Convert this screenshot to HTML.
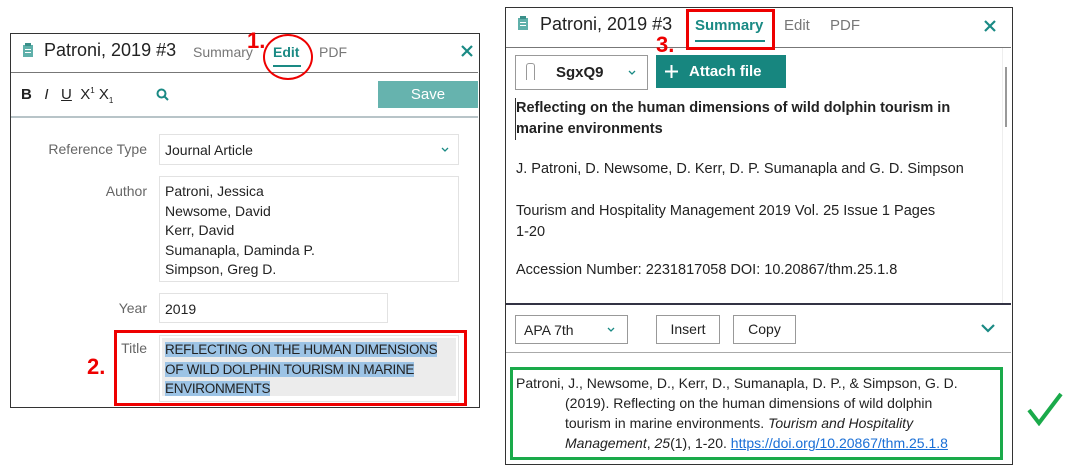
<!DOCTYPE html>
<html><head><style>
body{margin:0;width:1067px;height:469px;background:#fff;position:relative;overflow:hidden;font-family:"Liberation Sans",sans-serif;color:#222}
.a{position:absolute}
.box{position:absolute;border:1px solid #e2e2e2;background:#fff}
.lbl{position:absolute;color:#666;font-size:14px;text-align:right;width:137px;left:10px}
.red{color:#e00;font-weight:bold;font-size:22px;position:absolute}
.teal{color:#1a8a84}
</style></head><body>
<!-- LEFT PANEL -->
<div class="a" style="left:10px;top:33px;width:468px;height:373px;border:1px solid #333"></div>
<div class="a" style="left:11px;top:72px;width:467px;height:1px;background:#777"></div>
<div class="a" style="left:11px;top:116px;width:467px;height:2px;background:#b8c4c8"></div>
<svg class="a" style="left:22px;top:43px" width="12" height="15"><rect x="1" y="2" width="10" height="12" fill="#5fb0aa"/><rect x="3" y="0" width="6" height="3" fill="#3a8f89"/><rect x="3" y="6" width="6" height="1" fill="#fff"/><rect x="3" y="9" width="6" height="1" fill="#fff"/></svg>
<div class="a" style="left:44px;top:40px;font-size:18px">Patroni, 2019 #3</div>
<div class="a" style="left:193px;top:44px;font-size:14px;color:#777">Summary</div>
<div class="a" style="left:273px;top:44px;font-size:14px;font-weight:bold" ><span class="teal">Edit</span></div>
<div class="a" style="left:273px;top:65px;width:28px;height:2px;background:#1a8a84"></div>
<div class="a" style="left:319px;top:44px;font-size:14px;color:#777">PDF</div>
<svg class="a" style="left:461px;top:45px" width="12" height="12"><path d="M1 1L11 11M11 1L1 11" stroke="#1a8a84" stroke-width="2.2"/></svg>
<div class="red" style="left:247px;top:28px">1.</div>
<div class="a" style="left:263px;top:34px;width:46px;height:42px;border:2px solid #e00;border-radius:50%"></div>
<div class="a" style="left:21px;top:86px;font-size:15px"><b>B</b>&nbsp;&nbsp;&nbsp;<i>I</i>&nbsp;&nbsp;&nbsp;<u>U</u>&nbsp;&nbsp;X<sup style="font-size:8px">1</sup>&nbsp;X<sub style="font-size:8px">1</sub></div>
<svg class="a" style="left:156px;top:88px" width="14" height="14"><circle cx="5.5" cy="5.5" r="4" stroke="#1a8a84" stroke-width="2" fill="none"/><line x1="8.5" y1="8.5" x2="12" y2="12" stroke="#1a8a84" stroke-width="2"/></svg>
<div class="a" style="left:378px;top:81px;width:100px;height:27px;background:#66b3ae;color:#fff;font-size:15px;text-align:center;line-height:27px">Save</div>
<div class="lbl" style="top:141px">Reference Type</div>
<div class="box" style="left:159px;top:134px;width:298px;height:29px"><span class="a" style="left:5px;top:7px;font-size:14px">Journal Article</span><svg class="a" style="right:9px;top:12px" width="8" height="5"><path d="M1 1L4 4L7 1" stroke="#1a8a84" stroke-width="1.3" fill="none"/></svg></div>
<div class="lbl" style="top:183px">Author</div>
<div class="box" style="left:159px;top:176px;width:298px;height:104px;font-size:14px;line-height:19.5px"><div style="padding:5px 5px">Patroni, Jessica<br>Newsome, David<br>Kerr, David<br>Sumanapla, Daminda P.<br>Simpson, Greg D.</div></div>
<div class="lbl" style="top:300px">Year</div>
<div class="box" style="left:159px;top:293px;width:227px;height:28px"><span class="a" style="left:5px;top:7px;font-size:14px">2019</span></div>
<div class="lbl" style="top:340px">Title</div>
<div class="box" style="left:159px;top:335px;width:298px;height:65px"><div class="a" style="left:2px;top:2px;width:294px;height:58px;background:#ececec"></div>
<div class="a" style="left:5px;top:4px;font-size:13.5px;line-height:19.5px;width:295px;letter-spacing:-0.3px;white-space:nowrap"><span style="background:#9cc3e5">REFLECTING ON THE HUMAN DIMENSIONS</span><br><span style="background:#9cc3e5">OF WILD DOLPHIN TOURISM IN MARINE</span><br><span style="background:#9cc3e5">ENVIRONMENTS</span></div></div>
<div class="a" style="left:114px;top:330px;width:353px;height:76px;border:3px solid #e00;box-sizing:border-box"></div>
<div class="red" style="left:87px;top:354px">2.</div>

<!-- RIGHT PANEL -->
<div class="a" style="left:505px;top:7px;width:506px;height:456px;border:1px solid #333"></div>
<div class="a" style="left:506px;top:47px;width:505px;height:1px;background:#777"></div>
<svg class="a" style="left:517px;top:16px" width="12" height="15"><rect x="1" y="2" width="10" height="12" fill="#5fb0aa"/><rect x="3" y="0" width="6" height="3" fill="#3a8f89"/><rect x="3" y="6" width="6" height="1" fill="#fff"/><rect x="3" y="9" width="6" height="1" fill="#fff"/></svg>
<div class="a" style="left:540px;top:14px;font-size:18px">Patroni, 2019 #3</div>
<div class="a teal" style="left:695px;top:17px;font-size:15px;font-weight:bold">Summary</div>
<div class="a" style="left:695px;top:40px;width:70px;height:2px;background:#1a8a84"></div>
<div class="a" style="left:784px;top:17px;font-size:15px;color:#777">Edit</div>
<div class="a" style="left:830px;top:17px;font-size:15px;color:#777">PDF</div>
<svg class="a" style="left:984px;top:20px" width="12" height="12"><path d="M1 1L11 11M11 1L1 11" stroke="#1a8a84" stroke-width="2.2"/></svg>
<div class="a" style="left:686px;top:9px;width:89px;height:41px;border:3px solid #e00;box-sizing:border-box"></div>
<div class="red" style="left:656px;top:32px">3.</div>
<div class="a" style="left:1005px;top:67px;width:2px;height:60px;background:#999"></div>
<div class="a" style="left:1002px;top:48px;width:1px;height:256px;background:#eee"></div>
<div class="box" style="left:515px;top:55px;width:131px;height:33px;border-color:#999"><span class="a" style="left:10px;top:7px;width:7px;height:16px;border:1px solid #999;border-bottom:none;border-radius:3px 3px 0 0"></span><span class="a" style="left:40px;top:8px;font-size:15px;font-weight:bold">SgxQ9</span><svg class="a" style="right:11px;top:14px" width="8" height="5"><path d="M1 1L4 4L7 1" stroke="#1a8a84" stroke-width="1.3" fill="none"/></svg></div>
<div class="a" style="left:656px;top:55px;width:130px;height:33px;background:#17867f;color:#fff;font-size:15px;font-weight:bold;line-height:33px"><svg class="a" style="left:9px;top:10px" width="13" height="13"><path d="M6.5 0V13M0 6.5H13" stroke="#fff" stroke-width="2"/></svg><span style="position:absolute;left:33px">Attach file</span></div>
<div class="a" style="left:515px;top:98px;font-size:14.5px;font-weight:bold;line-height:21px;width:480px;white-space:nowrap;border-left:1px solid #333">Reflecting on the human dimensions of wild dolphin tourism in<br>marine environments</div>
<div class="a" style="left:516px;top:161px;font-size:14.5px;white-space:nowrap">J. Patroni, D. Newsome, D. Kerr, D. P. Sumanapla and G. D. Simpson</div>
<div class="a" style="left:516px;top:201px;font-size:14.5px;line-height:21px;width:450px;white-space:nowrap">Tourism and Hospitality Management 2019 Vol. 25 Issue 1 Pages<br>1-20</div>
<div class="a" style="left:516px;top:262px;font-size:14.5px;white-space:nowrap">Accession Number: 2231817058 DOI: 10.20867/thm.25.1.8</div>
<div class="a" style="left:506px;top:303px;width:505px;height:2px;background:#334"></div>
<div class="box" style="left:515px;top:315px;width:111px;height:27px;border-color:#999"><span class="a" style="left:8px;top:6px;font-size:14px">APA 7th</span><svg class="a" style="right:12px;top:11px" width="8" height="5"><path d="M1 1L4 4L7 1" stroke="#1a8a84" stroke-width="1.3" fill="none"/></svg></div>
<div class="box" style="left:656px;top:315px;width:62px;height:27px;border-color:#999;font-size:14px;text-align:center;line-height:27px">Insert</div>
<div class="box" style="left:733px;top:315px;width:61px;height:27px;border-color:#999;font-size:14px;text-align:center;line-height:27px">Copy</div>
<svg class="a" style="left:981px;top:324px" width="14" height="9"><path d="M1 1L7 7L13 1" stroke="#1a8a84" stroke-width="2.2" fill="none"/></svg>
<div class="a" style="left:506px;top:352px;width:505px;height:1px;background:#aaa"></div>
<div class="a" style="left:510px;top:367px;width:493px;height:93px;border:3px solid #1aaa4a;box-sizing:border-box"></div>
<div class="a" style="left:516px;top:373px;font-size:14px;line-height:20px;width:480px;white-space:nowrap">Patroni, J., Newsome, D., Kerr, D., Sumanapla, D. P., &amp; Simpson, G. D.
<div style="padding-left:49px">(2019). Reflecting on the human dimensions of wild dolphin<br>tourism in marine environments. <i>Tourism and Hospitality</i><br><i>Management</i>, <i>25</i>(1), 1-20. <span style="color:#1a6fd6;text-decoration:underline">https://doi.org/10.20867/thm.25.1.8</span></div></div>
<svg class="a" style="left:1027px;top:392px" width="36" height="34"><path d="M2 18L12 31L34 2" stroke="#1aaa4a" stroke-width="4" fill="none"/></svg>
</body></html>
